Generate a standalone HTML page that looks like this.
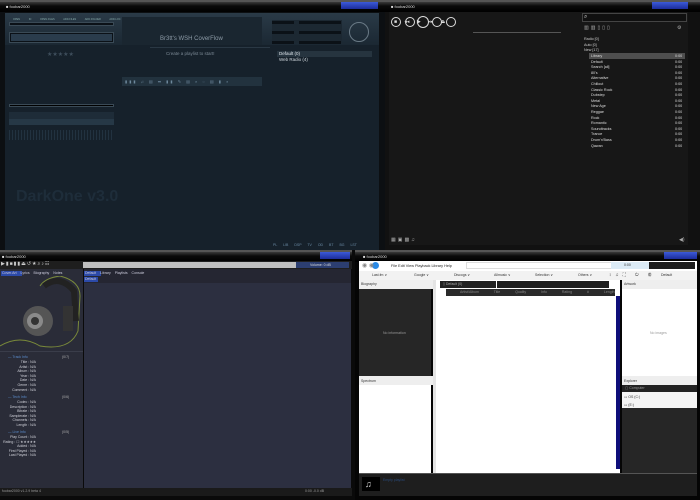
<!DOCTYPE html>
<html><head><meta charset="utf-8"><style>
*{margin:0;padding:0;box-sizing:border-box}
body{width:700px;height:500px;background:#000;position:relative;overflow:hidden;font-family:"Liberation Sans",sans-serif;font-size:4px;color:#ccc}
div{position:absolute}
.t{white-space:nowrap}
.tb{height:12px;background:linear-gradient(#3a3a3a,#0a0a0a 40%,#000)}
.btns{height:7px;background:linear-gradient(#3c5ad8,#1c2c9c);top:2px}
.c{width:10px;height:10px;border-radius:50%;border:1px solid #ddd;top:17px}
</style></head><body>

<!-- Q1 DarkOne -->
<div style="left:0;top:0;width:385px;height:250px;background:#0c0f12"></div>
<div class="tb" style="left:0;top:0;width:385px;border-top:2px solid #555"></div>
<div class="t" style="left:6px;top:4px;color:#ddd;font-size:4px">■ foobar2000</div>
<div class="btns" style="left:341px;width:37px"></div>
<div style="left:5px;top:13px;width:374px;height:237px;background:#16212b"></div>
<div style="left:5px;top:13px;width:374px;height:32px;background:linear-gradient(#2a3a47,#1b2833)"></div>
<div style="left:9px;top:22px;width:105px;height:4px;background:#0b1117;border:1px solid #3a4a56"></div>
<div style="left:9px;top:32px;width:105px;height:11px;background:#0b1117;border:1px solid #3a4a56"></div>
<div style="left:11px;top:34px;width:101px;height:7px;background:#2a3c4c"></div>
<div class="t" style="left:13px;top:18px;color:#8aa;font-size:2.5px;word-spacing:8px">OPEN IN OPEN.FILES ADD.FILES ADD.FOLDER ADD.LOC</div>
<div class="t" style="left:47px;top:51px;color:#3e4e5c;font-size:6px">★★★★★</div>
<div style="left:122px;top:17px;width:140px;height:28px;background:#1a2630"></div>
<div class="t" style="left:160px;top:36px;color:#8c9aa6;font-size:6px">Br3tt's WSH CoverFlow</div>
<div style="left:150px;top:47px;width:120px;height:1px;background:#2a3844"></div>
<div class="t" style="left:166px;top:51px;color:#7c8a96;font-size:4.5px">Create a playlist to start!</div>
<div style="left:272px;top:20px;width:70px;height:23px;background:#1c2832"></div>
<div style="left:272px;top:21px;width:22px;height:3px;background:#0b1117"></div>
<div style="left:299px;top:21px;width:42px;height:3px;background:#0b1117"></div>
<div style="left:272px;top:31px;width:22px;height:3px;background:#0b1117"></div>
<div style="left:299px;top:31px;width:42px;height:3px;background:#0b1117"></div>
<div style="left:272px;top:41px;width:22px;height:3px;background:#0b1117"></div>
<div style="left:299px;top:41px;width:42px;height:3px;background:#0b1117"></div>
<div style="left:349px;top:22px;width:20px;height:20px;border-radius:50%;border:1px solid #6a7a86"></div>
<div style="left:277px;top:51px;width:95px;height:6px;background:#26343f"></div>
<div class="t" style="left:279px;top:51px;color:#dfe6ec;font-size:4.5px">Default (0)</div>
<div class="t" style="left:279px;top:57px;color:#cfd6dc;font-size:4.5px">Web Radio (4)</div>
<div style="left:122px;top:77px;width:140px;height:9px;background:#22323e"></div>
<div class="t" style="left:125px;top:79px;color:#6f8a9e;font-size:4px;letter-spacing:2px">▮▮▮  ♫ ▤ ➡ ▮▮ ✎ ▤ ⌕ ◌ ▤ ▮ ⌕</div>
<div style="left:9px;top:104px;width:105px;height:3px;background:#000;border:1px solid #3a4a56"></div>
<div style="left:9px;top:112px;width:105px;height:13px;background:#1e2c38"></div>
<div style="left:9px;top:119px;width:105px;height:6px;background:#263846"></div>
<div style="left:9px;top:130px;width:105px;height:10px;background:repeating-linear-gradient(90deg,#223240 0 1px,#16212b 1px 3px)"></div>
<div class="t" style="left:16px;top:188px;color:#1e2d3a;font-size:16px;font-weight:bold">DarkOne v3.0</div>
<div class="t" style="left:273px;top:243px;color:#6a8aa4;font-size:3.5px;word-spacing:5px">PL LIB DSP TV OD BT BG LST</div>

<!-- Q2 -->
<div style="left:385px;top:0;width:315px;height:250px;background:#111"></div>
<div class="tb" style="left:385px;top:0;width:315px;border-top:2px solid #555"></div>
<div class="t" style="left:391px;top:4px;color:#ddd">■ foobar2000</div>
<div class="btns" style="left:652px;width:36px"></div>
<div style="left:389px;top:12px;width:299px;height:233px;background:#171717"></div>
<div class="c" style="left:391px"></div><div class="c" style="left:405px"></div><div class="c" style="left:417px;width:12px;height:12px;top:16px"></div><div class="c" style="left:432px"></div><div class="c" style="left:446px"></div>
<div class="t" style="left:394px;top:19px;color:#ddd;font-size:5px;word-spacing:6px">■ ◂◂ ▶ ▸▸ ⏏</div>
<div style="left:473px;top:32px;width:88px;height:1px;background:#555"></div>
<div style="left:582px;top:13px;width:105px;height:9px;border:1px solid #444;background:#101010"></div>
<div class="t" style="left:584px;top:14px;color:#ccc;font-size:6px">⌕</div>
<div class="t" style="left:584px;top:25px;color:#aaa;font-size:5px;letter-spacing:2px">▥▥▯▯▯</div>
<div class="t" style="left:677px;top:25px;color:#aaa;font-size:5px">⚙</div>
<div style="left:589px;top:53px;width:96px;height:6px;background:#4e4e4e"></div>
<div class="t" style="left:584px;top:37px;color:#ccc;font-size:3.7px;line-height:5.6px">Radio [0]<br>Auto [0]<br>New [17]</div>
<div class="t" style="left:591px;top:54px;color:#ddd;font-size:3.7px;line-height:5.6px">Library<br>Default<br>Search [all]<br>80's<br>Alternative<br>Chillout<br>Classic Rock<br>Dubstep<br>Metal<br>New Age<br>Reggae<br>Rock<br>Romantic<br>Soundtracks<br>Trance<br>Drum'n'Bass<br>Qawan</div>
<div class="t" style="left:675px;top:54px;color:#ddd;font-size:3.7px;line-height:5.6px">0:00<br>0:00<br>0:00<br>0:00<br>0:00<br>0:00<br>0:00<br>0:00<br>0:00<br>0:00<br>0:00<br>0:00<br>0:00<br>0:00<br>0:00<br>0:00<br>0:00</div>
<div class="t" style="left:391px;top:237px;color:#aaa;font-size:5px;letter-spacing:2px">▦▣▩♫</div>
<div class="t" style="left:679px;top:237px;color:#aaa;font-size:5px">◀)</div>

<!-- Q3 -->
<div style="left:0;top:250px;width:360px;height:250px;background:#0a0a0a"></div>
<div class="tb" style="left:0;top:250px;width:352px;border-top:2px solid #555"></div>
<div class="t" style="left:2px;top:254px;color:#ddd">■ foobar2000</div>
<div class="btns" style="left:320px;top:252px;width:30px"></div>
<div style="left:0;top:261px;width:352px;height:8px;background:#1e1e1e"></div>
<div class="t" style="left:1px;top:261px;color:#ccc;font-size:5px;letter-spacing:1px">▶▮■▮▮⏏↺★⌕♪☷</div>
<div style="left:83px;top:262px;width:213px;height:6px;background:#bfbfbf"></div>
<div style="left:296px;top:262px;width:53px;height:6px;background:#2c3e70"></div>
<div class="t" style="left:310px;top:263px;color:#ddd;font-size:3.5px">Volume: 0 dB</div>
<div style="left:0;top:269px;width:83px;height:219px;background:#2a2c38"></div>
<div style="left:84px;top:269px;width:267px;height:219px;background:#2c2f40"></div>
<div style="left:84px;top:269px;width:267px;height:14px;background:#252632"></div>
<div style="left:1px;top:271px;width:21px;height:5px;background:#2c4aa8"></div>
<div class="t" style="left:2px;top:271px;color:#ccd;font-size:3.5px;word-spacing:3px">Cover.Art Lyrics Biography Notes</div>
<div style="left:84px;top:271px;width:17px;height:5px;background:#2c4aa8"></div>
<div style="left:84px;top:277px;width:14px;height:5px;background:#2c4aa8"></div>
<div class="t" style="left:85px;top:271px;color:#ccd;font-size:3.5px;word-spacing:3px">Default Library Playlists Console</div>
<div class="t" style="left:85px;top:277px;color:#ccd;font-size:3.5px">Default</div>
<svg style="position:absolute;left:0;top:276px" width="82" height="75"><path d="M0 70 Q20 58 40 70 Q70 75 78 55 L80 20 Q80 5 60 0 Q45 2 40 10" fill="none" stroke="#7a8a3a" stroke-width="1"/><path d="M44 10 Q60 -2 74 15 L76 45" fill="none" stroke="#222" stroke-width="6"/><circle cx="38" cy="45" r="15" fill="#555"/><circle cx="35" cy="45" r="8" fill="#8a8a8a"/><circle cx="35" cy="45" r="4" fill="#333"/><rect x="63" y="30" width="10" height="25" fill="#333"/></svg>
<div style="left:0;top:351px;width:83px;height:1px;background:#3a3d4a"></div>
<div class="t" style="left:8px;top:355px;color:#5b8ccc;font-size:3.5px">— Track Info</div>
<div class="t" style="left:62px;top:355px;color:#aaa;font-size:3.5px">(0/7)</div>
<div class="t" style="left:8px;top:360px;color:#cfd0d8;font-size:3.5px;line-height:4.6px;text-align:right;width:28px">Title : N/A<br>Artist : N/A<br>Album : N/A<br>Year : N/A<br>Date : N/A<br>Genre : N/A<br>Comment : N/A</div>
<div class="t" style="left:8px;top:395px;color:#5b8ccc;font-size:3.5px">— Tech Info</div>
<div class="t" style="left:62px;top:395px;color:#aaa;font-size:3.5px">(0/6)</div>
<div class="t" style="left:2px;top:400px;color:#cfd0d8;font-size:3.5px;line-height:4.6px;text-align:right;width:34px">Codec : N/A<br>Description : N/A<br>Bitrate : N/A<br>Samplerate : N/A<br>Channels : N/A<br>Length : N/A</div>
<div class="t" style="left:8px;top:430px;color:#5b8ccc;font-size:3.5px">— Live Info</div>
<div class="t" style="left:62px;top:430px;color:#aaa;font-size:3.5px">(0/5)</div>
<div class="t" style="left:2px;top:435px;color:#cfd0d8;font-size:3.5px;line-height:4.6px;text-align:right;width:34px">Play Count : N/A<br>Rating : ☐ ★★★★★<br>Added : N/A<br>First Played : N/A<br>Last Played : N/A</div>
<div style="left:0;top:488px;width:352px;height:8px;background:#1a1a1a"></div>
<div class="t" style="left:2px;top:489px;color:#999;font-size:3.5px">foobar2000 v1.2.9 beta 4</div>
<div class="t" style="left:305px;top:489px;color:#999;font-size:3.5px">0:00     -0.0 dB</div>

<!-- Q4 -->
<div style="left:355px;top:250px;width:345px;height:250px;background:#050505"></div>
<div class="tb" style="left:355px;top:250px;width:345px;border-top:2px solid #555"></div>
<div class="t" style="left:363px;top:254px;color:#ddd">■ foobar2000</div>
<div class="btns" style="left:664px;top:252px;width:33px"></div>
<div style="left:359px;top:261px;width:338px;height:10px;background:#fff"></div>
<div style="left:372px;top:262px;width:7px;height:7px;border-radius:50%;background:#2a8ae6"></div>
<div class="t" style="left:362px;top:262px;color:#888;font-size:6px">◉  ◉</div>
<div class="t" style="left:391px;top:264px;color:#222;font-size:3.8px">File  Edit  View  Playback  Library  Help</div>
<div style="left:466px;top:262px;width:148px;height:7px;border:1px solid #ddd"></div>
<div style="left:611px;top:262px;width:38px;height:7px;background:#dcebf6"></div>
<div class="t" style="left:624px;top:263px;color:#333;font-size:3.5px">0:00</div>
<div style="left:649px;top:262px;width:46px;height:7px;background:#1c1c1c"></div>
<div style="left:359px;top:271px;width:338px;height:9px;background:#f2f2f2"></div>
<div class="t" style="left:372px;top:273px;color:#333;font-size:3.5px">Last.fm ∨</div>
<div class="t" style="left:414px;top:273px;color:#333;font-size:3.5px">Google ∨</div>
<div class="t" style="left:454px;top:273px;color:#333;font-size:3.5px">Discogs ∨</div>
<div class="t" style="left:494px;top:273px;color:#333;font-size:3.5px">Allmusic ∨</div>
<div class="t" style="left:535px;top:273px;color:#333;font-size:3.5px">Selection ∨</div>
<div class="t" style="left:578px;top:273px;color:#333;font-size:3.5px">Others ∨</div>
<div class="t" style="left:609px;top:272px;color:#333;font-size:4.5px;letter-spacing:4px">↕♫⛶ ⏻ ⚙</div>
<div class="t" style="left:661px;top:273px;color:#333;font-size:3.5px">Default</div>
<div style="left:359px;top:280px;width:74px;height:9px;background:#eee"></div>
<div class="t" style="left:361px;top:282px;color:#333;font-size:3.5px">Biography</div>
<div style="left:359px;top:289px;width:72px;height:87px;background:#262626"></div>
<div class="t" style="left:383px;top:331px;color:#999;font-size:3.5px">No information</div>
<div style="left:359px;top:376px;width:74px;height:9px;background:#eee"></div>
<div class="t" style="left:361px;top:379px;color:#333;font-size:3.5px">Spectrum</div>
<div style="left:359px;top:385px;width:72px;height:88px;background:#fff"></div>
<div style="left:433px;top:280px;width:3px;height:193px;background:#e4e4e4"></div>
<div style="left:436px;top:280px;width:184px;height:193px;background:#fff"></div>
<div style="left:440px;top:281px;width:56px;height:7px;background:#222"></div>
<div class="t" style="left:443px;top:282px;color:#aaa;font-size:3.5px">▯ Default (0)</div>
<div style="left:497px;top:281px;width:112px;height:7px;background:#1e1e1e"></div>
<div style="left:446px;top:289px;width:169px;height:7px;background:#2a2a2a"></div>
<div class="t" style="left:460px;top:290px;color:#888;font-size:3.5px;word-spacing:14px">Artist/Album Title Quality Info Rating # Length</div>
<div style="left:616px;top:296px;width:4px;height:173px;background:#0e0e7a"></div>
<div style="left:622px;top:280px;width:75px;height:9px;background:#eee"></div>
<div class="t" style="left:624px;top:282px;color:#333;font-size:3.5px">Artwork</div>
<div style="left:622px;top:289px;width:75px;height:87px;background:#fff"></div>
<div class="t" style="left:650px;top:331px;color:#999;font-size:3.5px">No images</div>
<div style="left:622px;top:376px;width:75px;height:9px;background:#eee"></div>
<div class="t" style="left:624px;top:379px;color:#333;font-size:3.5px">Explorer</div>
<div style="left:622px;top:385px;width:75px;height:7px;background:#222"></div>
<div class="t" style="left:625px;top:386px;color:#999;font-size:3.5px">▢ Computer</div>
<div style="left:622px;top:392px;width:75px;height:16px;background:#f4f4f4"></div>
<div class="t" style="left:624px;top:393px;color:#333;font-size:3.5px;line-height:8px">▭ OS (C:)<br>▭ (E:)</div>
<div style="left:622px;top:408px;width:75px;height:65px;background:#262626"></div>
<div style="left:359px;top:473px;width:338px;height:1px;background:#555"></div>
<div style="left:359px;top:474px;width:338px;height:22px;background:#1e1e1e"></div>
<div style="left:362px;top:477px;width:18px;height:14px;background:#000"></div>
<div class="t" style="left:365px;top:479px;color:#ddd;font-size:9px">♫</div>
<div class="t" style="left:383px;top:478px;color:#2a4a7a;font-size:3.5px">Empty playlist</div>
</body></html>
